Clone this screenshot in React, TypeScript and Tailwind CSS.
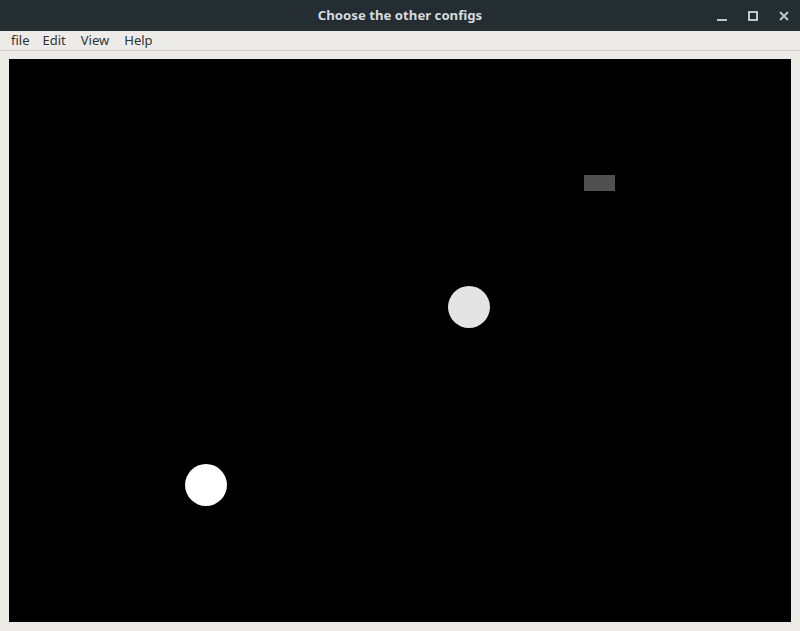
export default function App() {
  const menus = [
    { label: "file", cls: "mr-[-2px]" },
    { label: "Edit", cls: "" },
    { label: "View", cls: "" },
    { label: "Help", cls: "" },
  ];

  return (
    <div className="w-[800px] h-[631px] flex flex-col bg-[#edebe7] overflow-hidden" style={{ fontFamily: '"Noto Sans", "DejaVu Sans", sans-serif' }}>
      {/* title bar */}
      <div className="h-[31px] bg-[#232d32] flex items-center relative shrink-0">
        <div className="flex-1 text-center text-[13.2px] font-bold text-[#d5dbde] leading-none">Choose the other configs</div>
        <div className="absolute right-[11px] top-0 h-full flex items-center gap-[21px]">
          <svg width="10" height="10" viewBox="0 0 10 10">
            <rect x="0" y="8" width="10" height="2" fill="#bcc6cb" />
          </svg>
          <svg width="10" height="10" viewBox="0 0 10 10">
            <rect x="1" y="1" width="8" height="8" fill="none" stroke="#bcc6cb" strokeWidth="2" />
          </svg>
          <svg width="10" height="10" viewBox="0 0 10 10">
            <path d="M1 1 L9 9 M9 1 L1 9" stroke="#bcc6cb" strokeWidth="2" />
          </svg>
        </div>
      </div>

      {/* menu bar */}
      <div className="h-[19px] flex items-center pl-[11px] gap-[15px] text-[13px] text-[#2e3436] shrink-0">
        {menus.map((m) => (
          <span key={m.label} className={`leading-none ${m.cls}`}>{m.label}</span>
        ))}
      </div>
      <div className="h-px bg-[#d3cfca] shrink-0" />

      {/* canvas */}
      <div className="flex-1 pl-[9px] pr-[9px] pt-[8px] pb-[9px]">
        <div className="relative w-[782px] h-[563px] bg-black">
          <div className="absolute left-[575px] top-[116px] w-[31px] h-[16px] bg-[#505050]" />
          <div className="absolute left-[439px] top-[227px] w-[42px] h-[42px] rounded-full bg-[#e4e4e4]" />
          <div className="absolute left-[176px] top-[405px] w-[42px] h-[42px] rounded-full bg-white" />
        </div>
      </div>
    </div>
  );
}
